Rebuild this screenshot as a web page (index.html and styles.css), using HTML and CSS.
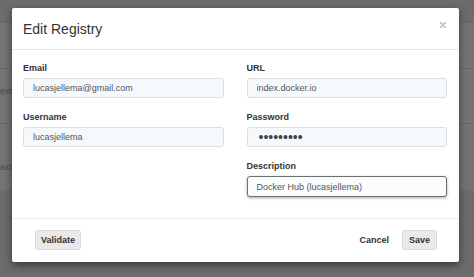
FILE: index.html
```html
<!DOCTYPE html>
<html lang="en">
<head>
    <meta charset="UTF-8">
    <meta name="viewport" content="width=device-width, initial-scale=1.0">
    <title>Edit Registry</title>
    <link rel="stylesheet" href="styles.css">
</head>
<body>
    <!-- page behind the backdrop -->
    <div class="page">
        <div class="bg-table">
            <div class="bg-row tall-1"></div>
            <div class="bg-row tall-2"><span>ext</span></div>
            <div class="bg-row tall-3"><span>ext</span></div>
        </div>
    </div>

    <div class="modal">
        <div class="modal-header">
            <h4 class="modal-title">Edit Registry</h4>
            <button class="close" type="button" aria-label="Close">
                <svg width="6" height="6" viewBox="0 0 6 6">
                    <path d="M0.5 0.5 L5.5 5.5 M5.5 0.5 L0.5 5.5" stroke="#bdbdbd" stroke-width="1.6" stroke-linecap="round"/>
                </svg>
            </button>
        </div>

        <form class="modal-body">
            <div class="form-group">
                <label for="email">Email</label>
                <input type="text" id="email" value="lucasjellema@gmail.com">
            </div>
            <div class="form-group">
                <label for="url">URL</label>
                <input type="text" id="url" value="index.docker.io">
            </div>
            <div class="form-group">
                <label for="username">Username</label>
                <input type="text" id="username" value="lucasjellema">
            </div>
            <div class="form-group">
                <label for="password">Password</label>
                <input type="password" id="password" class="pwd" value="secretpwd">
            </div>
            <div class="form-group"></div>
            <div class="form-group">
                <label for="description">Description</label>
                <input type="text" id="description" class="focused" value="Docker Hub (lucasjellema)">
            </div>
        </form>

        <div class="modal-footer">
            <button type="button" class="btn btn-validate">Validate</button>
            <div class="footer-right">
                <button type="button" class="btn btn-link">Cancel</button>
                <button type="button" class="btn btn-save">Save</button>
            </div>
        </div>
    </div>
</body>
</html>
```

FILE: styles.css
```css
* {
    margin: 0;
    padding: 0;
    box-sizing: border-box;
    font-family: 'Liberation Sans', Arial, sans-serif;
}

body {
    background-color: #6c6c6c;
    height: 277px;
    overflow: hidden;
}

/* background page, dimmed */
.page {
    padding-top: 22px;
}

.bg-table {
    background: #747474;
}

.bg-row {
    border-top: 1px solid #686868;
    font-size: 9px;
    line-height: 11px;
    color: #4a4a4a;
}

.tall-1 { height: 46px; }
.tall-2 { height: 55px; padding-top: 17px; }
.tall-3 { height: 67px; padding-top: 38px; }

/* modal */
.modal {
    position: absolute;
    left: 12px;
    top: 8px;
    width: 447px;
    height: 254px;
    background: white;
    border-radius: 2px;
    box-shadow: 0 3px 9px rgba(0,0,0,0.5);
    display: flex;
    flex-direction: column;
}

.modal-header {
    display: flex;
    justify-content: space-between;
    align-items: flex-start;
    height: 42px;
    padding: 13px 13px 0 11px;
    border-bottom: 1px solid #e8e8e8;
}

.modal-title {
    font-size: 14px;
    line-height: 16px;
    font-weight: normal;
    color: #333;
}

.close {
    background: none;
    border: none;
    display: flex;
    margin-top: 1px;
    cursor: pointer;
}

.modal-body {
    flex: 1;
    display: grid;
    grid-template-columns: minmax(0, 1fr) minmax(0, 1fr);
    column-gap: 23px;
    row-gap: 14px;
    align-content: start;
    padding: 13px 12px 0 11px;
}

.form-group {
    display: flex;
    flex-direction: column;
    min-width: 0;
}

label {
    font-size: 9px;
    line-height: 11px;
    font-weight: bold;
    color: #333;
    margin-bottom: 4px;
}

input {
    width: 100%;
    min-width: 0;
    height: 20px;
    padding: 0 9px;
    font-size: 9px;
    color: #555;
    background: #f6f9fc;
    border: 1px solid #dedede;
    border-radius: 3px;
    outline: none;
}

input.pwd {
    font-size: 14px;
    padding: 0 11px;
    color: #444;
}

input.focused {
    height: 21px;
    border-color: #6f6f6f;
    background: #fafcfe;
    box-shadow: 0 1px 3px rgba(0,0,0,0.35);
}

.modal-footer {
    height: 44px;
    display: flex;
    justify-content: space-between;
    align-items: flex-start;
    padding: 11px 22px 0 23px;
    border-top: 1px solid #ececec;
}

.footer-right {
    display: flex;
    gap: 6px;
}

.btn {
    height: 20px;
    font-size: 9px;
    font-weight: bold;
    color: #333;
    background: #e9e9e9;
    border: 1px solid #d9d9d9;
    border-radius: 3px;
    cursor: pointer;
}

.btn-validate {
    padding: 0 5px;
}

.btn-save {
    padding: 0 6px;
}

.btn-link {
    background: none;
    border-color: transparent;
    padding: 0 6px;
}
```
